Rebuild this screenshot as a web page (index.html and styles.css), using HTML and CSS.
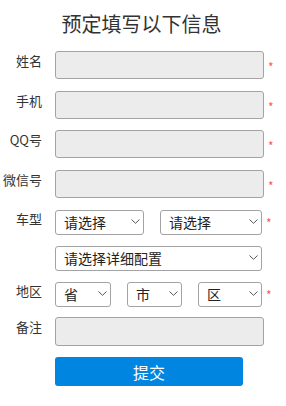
FILE: index.html
```html
<!DOCTYPE html>
<html lang="zh-CN">
<head>
  <meta charset="utf-8">
  <meta name="viewport" content="width=device-width, initial-scale=1">
  <title>预定填写以下信息</title>
  <link rel="stylesheet" href="styles.css">
</head>
<body>
  <form class="book" onsubmit="return false">
    <h2 class="title">预定填写以下信息</h2>

    <div class="row wide">
      <label class="lbl">姓名</label>
      <input class="txt" type="text">
      <span class="req">*</span>
    </div>
    <div class="row">
      <label class="lbl">手机</label>
      <input class="txt" type="text">
      <span class="req">*</span>
    </div>
    <div class="row wide">
      <label class="lbl">QQ号</label>
      <input class="txt" type="text">
      <span class="req">*</span>
    </div>
    <div class="row">
      <label class="lbl">微信号</label>
      <input class="txt" type="text">
      <span class="req">*</span>
    </div>

    <div class="row">
      <label class="lbl">车型</label>
      <span class="pick car1">
        <select class="sel"><option>请选择</option></select>
        <svg class="arrow" width="9" height="5" viewBox="0 0 9 5"><path d="M0.5 0.5 L4.5 4.3 L8.5 0.5" fill="none" stroke="#555" stroke-width="1"/></svg>
      </span>
      <span class="pick car2">
        <select class="sel"><option>请选择</option></select>
        <svg class="arrow" width="9" height="5" viewBox="0 0 9 5"><path d="M0.5 0.5 L4.5 4.3 L8.5 0.5" fill="none" stroke="#555" stroke-width="1"/></svg>
      </span>
      <span class="req">*</span>
    </div>
    <div class="row">
      <label class="lbl"></label>
      <span class="pick detail">
        <select class="sel"><option>请选择详细配置</option></select>
        <svg class="arrow" width="9" height="5" viewBox="0 0 9 5"><path d="M0.5 0.5 L4.5 4.3 L8.5 0.5" fill="none" stroke="#555" stroke-width="1"/></svg>
      </span>
    </div>
    <div class="row">
      <label class="lbl">地区</label>
      <span class="pick prov">
        <select class="sel"><option>省</option></select>
        <svg class="arrow" width="9" height="5" viewBox="0 0 9 5"><path d="M0.5 0.5 L4.5 4.3 L8.5 0.5" fill="none" stroke="#555" stroke-width="1"/></svg>
      </span>
      <span class="pick city">
        <select class="sel"><option>市</option></select>
        <svg class="arrow" width="9" height="5" viewBox="0 0 9 5"><path d="M0.5 0.5 L4.5 4.3 L8.5 0.5" fill="none" stroke="#555" stroke-width="1"/></svg>
      </span>
      <span class="pick dist">
        <select class="sel"><option>区</option></select>
        <svg class="arrow" width="9" height="5" viewBox="0 0 9 5"><path d="M0.5 0.5 L4.5 4.3 L8.5 0.5" fill="none" stroke="#555" stroke-width="1"/></svg>
      </span>
      <span class="req">*</span>
    </div>

    <div class="row">
      <label class="lbl">备注</label>
      <textarea class="txt note"></textarea>
    </div>

    <div class="row">
      <label class="lbl"></label>
      <button class="submit">提交</button>
    </div>
  </form>
</body>
</html>
```

FILE: styles.css
```css
body {
  margin: 0;
  font-family: "Noto Sans CJK SC", "Noto Sans", sans-serif;
  color: #333;
  background: #fff;
}
.book {
  width: 286px;
}
.title {
  margin: 12px 0 15px;
  font-size: 20px;
  font-weight: normal;
  line-height: 24px;
  text-align: center;
  padding-right: 3px;
}
.row {
  display: flex;
  align-items: flex-start;
  margin-bottom: 11px;
}
.row.wide {
  margin-bottom: 12px;
}
.lbl {
  width: 42px;
  margin-right: 13px;
  flex-shrink: 0;
  text-align: right;
  font-size: 13px;
  line-height: 18px;
  padding-top: 1px;
}
.txt {
  box-sizing: border-box;
  width: 209px;
  height: 28px;
  margin: 0;
  border: 1px solid #a3a3a3;
  border-radius: 3px;
  background: #ececec;
  resize: none;
}
.note {
  height: 29px;
}
.req {
  margin-left: 4px;
  align-self: center;
  color: #f55;
  font-size: 12px;
  line-height: 12px;
  padding-top: 3px;
}
.pick {
  position: relative;
  display: block;
  height: 25px;
}
.pick .sel {
  box-sizing: border-box;
  width: 100%;
  height: 25px;
  margin: 0;
  appearance: none;
  -webkit-appearance: none;
  font-family: "Noto Sans CJK SC", sans-serif;
  font-size: 14px;
  color: #222;
  background: #fff;
  border: 1px solid #a3a3a3;
  border-radius: 3px;
  padding: 0 18px 0 8px;
}
.arrow {
  position: absolute;
  right: 4px;
  top: 10px;
  pointer-events: none;
}
.car1 { width: 89px; margin-right: 16px; }
.car2 { width: 102px; }
.detail { width: 207px; }
.prov { width: 56px; margin-right: 16px; }
.city { width: 55px; margin-right: 16px; }
.dist { width: 64px; }
.submit {
  width: 188px;
  height: 29px;
  margin: 0;
  border: none;
  border-radius: 3px;
  background: #0086e0;
  color: #fff;
  font-family: "Noto Sans CJK SC", sans-serif;
  font-size: 16px;
  cursor: pointer;
}
```
